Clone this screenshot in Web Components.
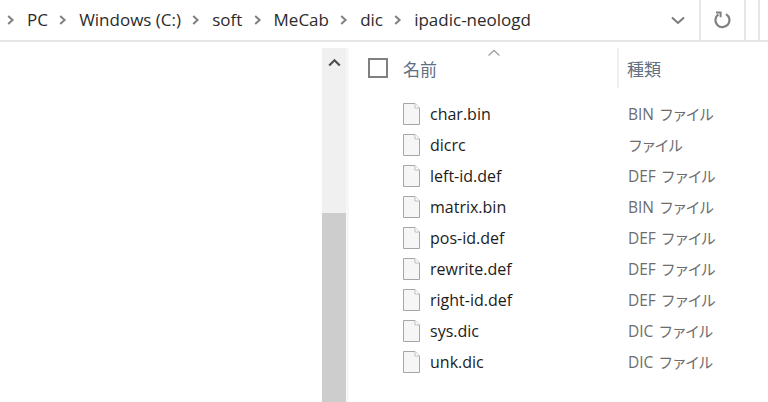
<!DOCTYPE html>
<html><head><meta charset="utf-8"><style>
html,body{margin:0;padding:0;background:#fff}
body{width:768px;height:402px;overflow:hidden;font-family:"Open Sans","Noto Sans CJK JP",sans-serif}
</style></head><body>
<explorer-window></explorer-window>
<script>
const CJK='"Open Sans","Noto Sans CJK JP",sans-serif';
class Crumb extends HTMLElement{
 constructor(){super();this.attachShadow({mode:'open'}).innerHTML=`<style>
 :host{display:flex;align-items:center;gap:12px;font-size:17px;color:#2b2b2b;white-space:nowrap;line-height:22px}
 svg{width:8px;height:10px;flex:none}
 </style><svg viewBox="0 0 8 10"><path d="M1.2 1 5.6 5 1.2 9" fill="none" stroke="#808080" stroke-width="2"/></svg><span><slot></slot></span>`;}
}
customElements.define('path-crumb',Crumb);
class AddressBar extends HTMLElement{
 constructor(){super();this.attachShadow({mode:'open'}).innerHTML=`<style>
 :host{display:flex;height:42px;box-sizing:border-box;border-bottom:2px solid #e6e6e6}
 .box{width:746px;flex:none;display:flex;box-sizing:border-box;border-right:2px solid #e6e6e6}
 .crumbs{flex:1;display:flex;align-items:center;gap:11.2px;padding:0 0 1px 7px}
 .dd{width:38px;flex:none;box-sizing:border-box;padding-right:5px;display:flex;align-items:center;justify-content:center}
 .rf{width:45px;flex:none;box-sizing:border-box;padding-right:1px;border-left:2px solid #e6e6e6;display:flex;align-items:center;justify-content:center}
 .search{margin-left:12px;flex:1;border-left:2px solid #e6e6e6}
 </style><div class="box"><div class="crumbs"><slot></slot></div>
 <div class="dd"><svg width="14" height="9" viewBox="0 0 14 9"><path d="M1 1.5 7 7 13 1.5" fill="none" stroke="#7a7a7a" stroke-width="2"/></svg></div>
 <div class="rf"><svg width="18" height="18" viewBox="0 0 18 18"><path d="M5.4 3.4A7 7 0 1 0 13 3.1" fill="none" stroke="#808080" stroke-width="2.2"/><path d="M3 1.6H7.6V6.2" fill="none" stroke="#808080" stroke-width="2"/></svg></div></div>
 <div class="search"></div>`;}
}
customElements.define('address-bar',AddressBar);
class FileRow extends HTMLElement{
 constructor(){super();
 const ext=this.getAttribute('ext');
 this.attachShadow({mode:'open'}).innerHTML=`<style>
 :host{display:grid;grid-template-columns:279px 1fr;height:31px;align-items:center;font-size:16px;line-height:22px;white-space:nowrap}
 .n{display:flex;align-items:center;gap:10px;padding-left:54px;color:#1c1c1c}
 .t{color:#6d6d6d;font-size:15.5px;display:flex;gap:5px;align-items:center}
 .k{font-size:15px;letter-spacing:-1.7px}
 svg{flex:none;display:block}
 </style><div class="n"><svg width="17" height="22" viewBox="0 0 17 22"><path d="M.5.5H12L16.5 5V21.5H.5Z" fill="#f6f6f6" stroke="#a6a6a6"/><path d="M12 .5V5H16.5" fill="#fff" stroke="#bdbdbd"/></svg><span><slot></slot></span></div><div class="t">${ext?`<span>${ext}</span>`:''}<span class="k">ファイル</span></div>`;}
}
customElements.define('file-row',FileRow);
class ColumnHead extends HTMLElement{
 constructor(){super();this.attachShadow({mode:'open'}).innerHTML=`<style>
 :host{display:grid;grid-template-columns:270px 1fr;height:40px;align-items:center;font:17px ${CJK};color:#5f7083;position:relative}
 .a{display:flex;align-items:center;padding-left:19px;gap:15px;height:100%;box-sizing:border-box;border-right:2px solid #efefef}
 .cb{width:20px;height:20px;box-sizing:border-box;border:2px solid #808080;flex:none}
 .b{padding-left:8px}
 .sort{position:absolute;left:138px;top:1px;display:block}
 </style><svg class="sort" width="14" height="8" viewBox="0 0 14 8"><path d="M1.5 6.5 7 1.5 12.5 6.5" fill="none" stroke="#a0a0a0" stroke-width="1.3"/></svg>
 <div class="a"><span class="cb"></span><span>名前</span></div><div class="b">種類</div>`;}
}
customElements.define('column-head',ColumnHead);
class ScrollTrack extends HTMLElement{
 constructor(){super();this.attachShadow({mode:'open'}).innerHTML=`<style>
 :host{display:flex;flex-direction:column;width:24px;background:#f0f0f0;height:100%}
 .up{height:28px;flex:none;display:flex;align-items:center;justify-content:center}
 .sp{height:137px;flex:none}
 .th{flex:1;background:#cdcdcd}
 </style><div class="up"><svg width="13" height="9" viewBox="0 0 13 9"><path d="M1.2 7.5 6.5 2.2 11.8 7.5" fill="none" stroke="#505050" stroke-width="2.2"/></svg></div><div class="sp"></div><div class="th"></div>`;}
}
customElements.define('scroll-track',ScrollTrack);
class ExplorerWindow extends HTMLElement{
 constructor(){super();this.attachShadow({mode:'open'}).innerHTML=`<style>
 :host{display:block;width:768px;height:402px;overflow:hidden;font-family:${CJK}}
 .body{display:grid;grid-template-columns:322px 24px 1fr;padding-top:6px;height:354px}
 .list{border-left:3px solid #f7f7f7}
 .rows{padding-top:10px}
 </style>
 <address-bar>
  <path-crumb>PC</path-crumb><path-crumb>Windows (C:)</path-crumb><path-crumb>soft</path-crumb><path-crumb>MeCab</path-crumb><path-crumb>dic</path-crumb><path-crumb>ipadic-neologd</path-crumb>
 </address-bar>
 <div class="body"><div></div><scroll-track></scroll-track>
 <div class="list"><column-head></column-head><div class="rows">
 <file-row ext="BIN">char.bin</file-row>
 <file-row>dicrc</file-row>
 <file-row ext="DEF">left-id.def</file-row>
 <file-row ext="BIN">matrix.bin</file-row>
 <file-row ext="DEF">pos-id.def</file-row>
 <file-row ext="DEF">rewrite.def</file-row>
 <file-row ext="DEF">right-id.def</file-row>
 <file-row ext="DIC">sys.dic</file-row>
 <file-row ext="DIC">unk.dic</file-row>
 </div></div></div>`;}
}
customElements.define('explorer-window',ExplorerWindow);
</script></body></html>
